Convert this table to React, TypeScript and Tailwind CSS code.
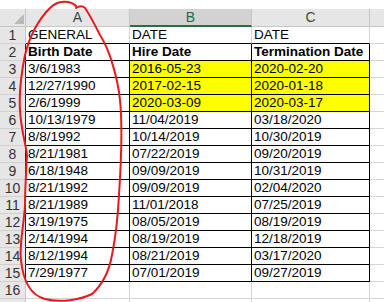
import React from "react";

const data: string[][] = [
  ["GENERAL", "DATE", "DATE"],
  ["Birth Date", "Hire Date", "Termination Date"],
  ["3/6/1983", "2016-05-23", "2020-02-20"],
  ["12/27/1990", "2017-02-15", "2020-01-18"],
  ["2/6/1999", "2020-03-09", "2020-03-17"],
  ["10/13/1979", "11/04/2019", "03/18/2020"],
  ["8/8/1992", "10/14/2019", "10/30/2019"],
  ["8/21/1981", "07/22/2019", "09/20/2019"],
  ["6/18/1948", "09/09/2019", "10/31/2019"],
  ["8/21/1992", "09/09/2019", "02/04/2020"],
  ["8/21/1989", "11/01/2018", "07/25/2019"],
  ["3/19/1975", "08/05/2019", "08/19/2019"],
  ["2/14/1994", "08/19/2019", "12/18/2019"],
  ["8/12/1994", "08/21/2019", "03/17/2020"],
  ["7/29/1977", "07/01/2019", "09/27/2019"],
  ["", "", ""],
  ["", "", ""],
];

const widths = ["w-[104px]", "w-[122px]", "w-[118px]"];

export default function App() {
  return (
    <div
      className="relative w-[384px] h-[302px] overflow-hidden bg-white pt-[9px]"
      style={{ fontFamily: '"Liberation Sans", Arial, sans-serif' }}
    >
      {/* column header row */}
      <div className="flex h-[18px]">
        <div className="relative w-[26px] h-full bg-[#e6e6e6] border-r border-b border-[#c6c6c6]">
          <svg className="absolute left-[14px] top-[5px]" width="10" height="10" viewBox="0 0 10 10">
            <polygon points="10,0 10,10 0,10" fill="#b9b9b9" />
          </svg>
        </div>
        <div className="w-[104px] h-full bg-[#e6e6e6] border-r border-b border-[#c6c6c6] flex items-center justify-center text-[14px] text-[#444]">
          A
        </div>
        <div className="w-[122px] h-full bg-[#d2d2d2] border-r border-[#c6c6c6] border-b-2 border-b-[#217346] flex items-center justify-center text-[14px] text-[#1e6b41]">
          B
        </div>
        <div className="w-[118px] h-full bg-[#e6e6e6] border-r border-b border-[#c6c6c6] flex items-center justify-center text-[14px] text-[#444]">
          C
        </div>
        <div className="flex-1 h-full bg-[#e6e6e6] border-b border-[#c6c6c6]" />
      </div>

      {data.map((row, r) => {
        const inTable = r >= 1 && r <= 14;
        const topEdge = r === 0;
        return (
          <div key={r} className="flex h-[17px]">
            <div
              className={
                "w-[26px] h-full bg-[#e6e6e6] border-b border-b-[#d0d0d0] border-r flex items-center justify-center text-[14px] text-[#333] " +
                (inTable ? "border-r-[#222]" : "border-r-[#c6c6c6]")
              }
            >
              {r + 1}
            </div>
            {row.map((cell, c) => {
              const yellow = r >= 2 && r <= 4 && c >= 1;
              const bold = r === 1;
              const bordered = inTable;
              return (
                <div
                  key={c}
                  className={
                    widths[c] +
                    " h-full flex items-center pl-[2px] whitespace-nowrap overflow-visible text-[13.5px] text-black border-r border-b " +
                    (bordered
                      ? "border-r-black border-b-black "
                      : topEdge
                      ? "border-r-[#d4d4d4] border-b-black "
                      : "border-r-[#d4d4d4] border-b-[#d4d4d4] ") +
                    (c === 2 && bordered ? "" : "") +
                    (yellow ? "bg-[#ffff00] " : "bg-white ") +
                    (bold ? "font-bold" : "font-normal")
                  }
                >
                  {cell}
                </div>
              );
            })}
            <div className="flex-1 h-full border-b border-[#d4d4d4]" />
          </div>
        );
      })}

      <svg
        className="absolute left-0 top-0 pointer-events-none"
        width="384"
        height="302"
        viewBox="0 0 384 302"
      >
        <path
          d="M 76 6 C 70 0, 58 0, 50 8 C 40 18, 30 35, 25 55 C 21 75, 19 95, 20 110 C 21 130, 26 145, 27 155 C 26 175, 25 190, 25 205 C 24 225, 19 245, 21 260 C 23 280, 30 295, 45 299 C 60 303, 80 300, 92 294 C 102 285, 109 272, 112 255 C 116 235, 118 215, 119 195 C 121 165, 123 130, 120 100 C 118 80, 110 50, 100 35 C 95 25, 90 15, 85 8 C 82 5, 79 6, 76 8"
          fill="none"
          stroke="#e8191c"
          strokeWidth="2"
          strokeLinecap="round"
        />
      </svg>
    </div>
  );
}
